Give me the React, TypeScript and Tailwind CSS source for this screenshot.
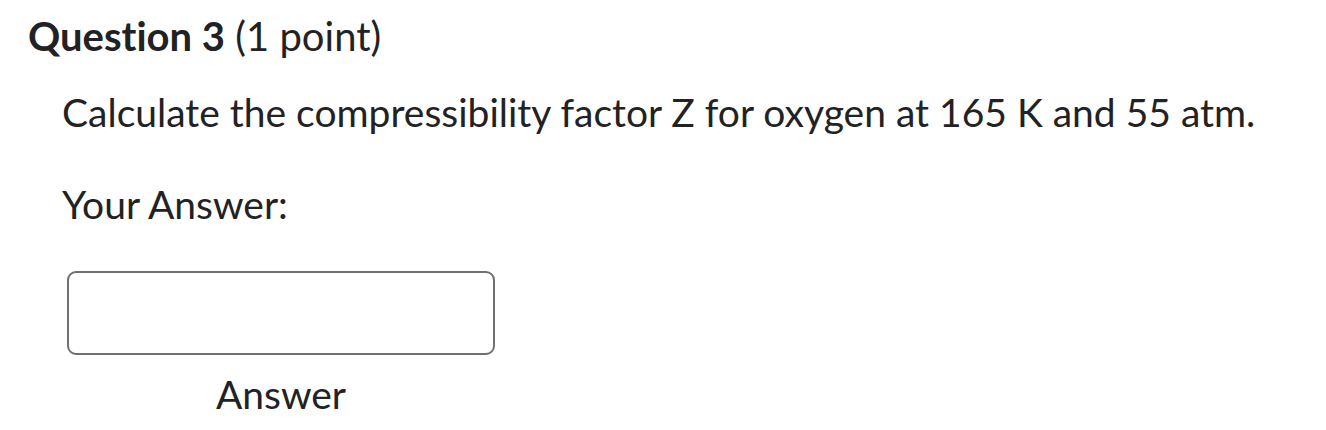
export default function App() {
  return (
    <div className="w-[1326px] h-[430px] bg-white text-[#222] font-['Lato',sans-serif] [font-variant-ligatures:none] overflow-hidden">
      <div className="pl-[28px] pt-[12px]">
        <h2 className="text-[40px] leading-[48px]">
          <span className="font-bold">Question 3</span> <span>(1 point)</span>
        </h2>
      </div>
      <div className="pl-[62px] pt-[29px]">
        <p className="text-[39px] leading-[47px]">
          Calculate the compressibility factor Z for oxygen at 165 K and 55 atm.
        </p>
        <p className="text-[39px] leading-[47px] mt-[45px]">Your Answer:</p>
        <div className="mt-[43px] ml-[5px] w-[428px] flex flex-col items-center">
          <input
            type="text"
            aria-label="Answer"
            className="w-full h-[84px] border-2 border-[#707070] rounded-[9px] bg-white outline-none"
          />
          <label className="text-[39px] leading-[47px] mt-[16px]">Answer</label>
        </div>
      </div>
    </div>
  )
}
